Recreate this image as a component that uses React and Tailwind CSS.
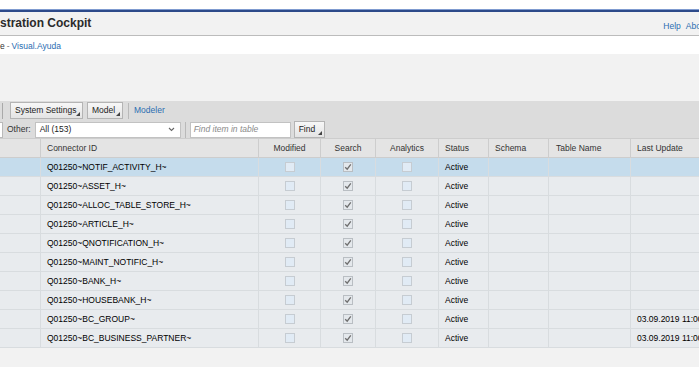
const rows = [
  { id: 'Q01250~NOTIF_ACTIVITY_H~', selected: true },
  { id: 'Q01250~ASSET_H~' },
  { id: 'Q01250~ALLOC_TABLE_STORE_H~' },
  { id: 'Q01250~ARTICLE_H~' },
  { id: 'Q01250~QNOTIFICATION_H~' },
  { id: 'Q01250~MAINT_NOTIFIC_H~' },
  { id: 'Q01250~BANK_H~' },
  { id: 'Q01250~HOUSEBANK_H~' },
  { id: 'Q01250~BC_GROUP~', updated: '03.09.2019 11:00' },
  { id: 'Q01250~BC_BUSINESS_PARTNER~', updated: '03.09.2019 11:00' },
]

const cols = 'grid grid-cols-[41px_218px_62px_55px_63px_50px_60px_82px_1fr]'

function MenuButton({ children, className = '' }) {
  return (
    <button className={'relative h-[17px] pl-[4px] text-left border border-[#b4b4b4] bg-gradient-to-b from-[#f7f7f7] to-[#e4e4e4] text-[8.5px] text-[#222] leading-none ' + className}>
      {children}
      <span className="absolute right-[2px] bottom-[2px] w-0 h-0 border-l-[4px] border-l-transparent border-b-[4px] border-b-[#444]" />
    </button>
  )
}

function Checkbox({ checked }) {
  return (
    <span
      className={
        'flex items-center justify-center w-[10px] h-[10px] border ' +
        (checked ? 'border-[#b9bec3] bg-[#e4e8ec]' : 'border-[#c6ccd2] bg-[#e1ebf5]')
      }
    >
      {checked && (
        <svg width="8" height="8" viewBox="0 0 8 8">
          <path d="M1.2 4.2 L3.2 6.2 L6.8 1.4" fill="none" stroke="#6e6e6e" strokeWidth="1.3" />
        </svg>
      )}
    </span>
  )
}

function Separator() {
  return <span className="block w-px h-[16px] bg-[#b9b9b9]" />
}

export default function App() {
  return (
    <div className="w-[699px] h-[367px] overflow-hidden bg-[#f2f2f2] font-[family-name:Liberation_Sans,Arial,sans-serif] text-[8.5px] text-[#333]">
      {/* top chrome */}
      <div className="h-[9px] bg-white" />
      <div className="h-[3px] bg-[#2d4a8a] border-t border-[#7f9bd0]" />
      <header className="h-[24px] flex items-center justify-between bg-[#f2f2f2] border-b border-[#bcbcbc] shadow-[0_1px_1px_rgba(0,0,0,0.12)]">
        <h1 className="text-[12px] font-bold text-[#2b2b2b] leading-none -mt-[1px]">stration Cockpit</h1>
        <nav className="flex gap-[5px] pt-[5px] -mr-[9px] text-[8.5px] text-[#2a6db1] whitespace-nowrap">
          <a>Help</a>
          <a>About</a>
        </nav>
      </header>

      {/* breadcrumb */}
      <div className="h-[18px] bg-white flex items-center whitespace-nowrap pt-[3px]">
        <span className="text-[#333]">e</span>
        <span className="text-[#777] px-[2px]">-</span>
        <a className="text-[#2a6db1]">Visual.Ayuda</a>
      </div>

      <div className="h-[47px]" />

      {/* toolbar */}
      <div className="h-[37px] bg-[#dcdcdc] flex flex-col gap-[2px] pt-[1px]">
        <div className="flex items-center h-[17px]">
          <span className="w-px h-[16px] bg-[#a9a9a9] ml-[2px] mr-[7px]" />
          <MenuButton className="w-[73px]">System Settings</MenuButton>
          <span className="w-[4px]" />
          <MenuButton className="w-[36px]">Model</MenuButton>
          <span className="mx-[5px]"><Separator /></span>
          <a className="text-[#2a6db1] text-[8.5px]">Modeler</a>
        </div>
        <div className="flex items-center h-[17px]">
          <span className="w-[3px] h-[16px] bg-white border border-l-0 border-[#b9b9b9]" />
          <span className="ml-[4px] mr-[4px] text-[#333]">Other:</span>
          <div className="w-[146px] h-[16px] bg-white border border-[#c2c2c2] flex items-center justify-between pl-[4px] pr-[5px]">
            <span className="text-[#222]">All (153)</span>
            <svg width="7" height="5" viewBox="0 0 7 5">
              <path d="M1 1 L3.5 3.5 L6 1" fill="none" stroke="#666" strokeWidth="1.1" />
            </svg>
          </div>
          <span className="mx-[4px]"><Separator /></span>
          <div className="w-[101px] h-[16px] bg-white border border-[#c2c2c2] flex items-center pl-[3px]">
            <span className="italic text-[#8a8a8a]">Find item in table</span>
          </div>
          <span className="w-[3px]" />
          <MenuButton className="w-[31px]">Find</MenuButton>
        </div>
      </div>

      {/* table */}
      <div className={cols + ' h-[20px] bg-[#e4e4e4] border-y border-[#cdcdcd]'}>
        <div className="border-r border-[#cdcdcd]" />
        <div className="border-r border-[#cdcdcd] flex items-center pl-[6px]">Connector ID</div>
        <div className="border-r border-[#cdcdcd] flex items-center justify-center">Modified</div>
        <div className="border-r border-[#cdcdcd] flex items-center justify-center">Search</div>
        <div className="border-r border-[#cdcdcd] flex items-center justify-center">Analytics</div>
        <div className="border-r border-[#cdcdcd] flex items-center pl-[6px]">Status</div>
        <div className="border-r border-[#cdcdcd] flex items-center pl-[6px]">Schema</div>
        <div className="border-r border-[#cdcdcd] flex items-center pl-[7px]">Table Name</div>
        <div className="flex items-center pl-[6px] whitespace-nowrap">Last Update</div>
      </div>
      {rows.map((r) => (
        <div
          key={r.id}
          className={
            cols +
            ' h-[19px] border-b border-[#d8dcdf] text-[#000] ' +
            (r.selected ? 'bg-[#c5dcec]' : 'bg-[#e8ebee]')
          }
        >
          <div className="border-r border-[#d8dcdf]" />
          <div className="border-r border-[#d8dcdf] flex items-center pl-[6px] whitespace-nowrap">{r.id}</div>
          <div className="border-r border-[#d8dcdf] flex items-center justify-center"><Checkbox /></div>
          <div className="border-r border-[#d8dcdf] flex items-center justify-center"><Checkbox checked /></div>
          <div className="border-r border-[#d8dcdf] flex items-center justify-center"><Checkbox /></div>
          <div className="border-r border-[#d8dcdf] flex items-center pl-[6px]">Active</div>
          <div className="border-r border-[#d8dcdf]" />
          <div className="border-r border-[#d8dcdf]" />
          <div className="flex items-center pl-[6px] whitespace-nowrap overflow-hidden">{r.updated}</div>
        </div>
      ))}
    </div>
  )
}
